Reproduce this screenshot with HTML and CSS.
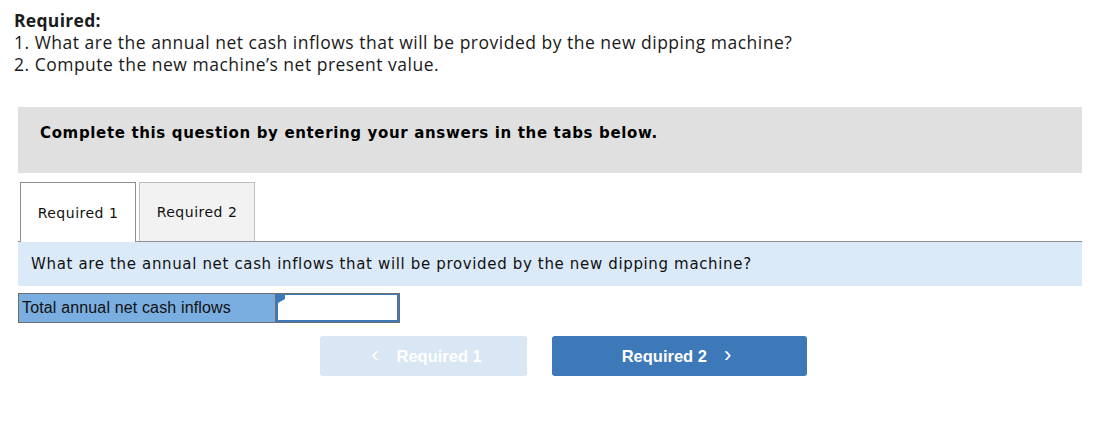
FILE: index.html
```html
<!DOCTYPE html>
<html>
<head>
<meta charset="utf-8">
<link rel="stylesheet" href="styles.css">
</head>
<body>
<div class="intro">
  <div class="req-title">Required:</div>
  <div class="req-line">1. What are the annual net cash inflows that will be provided by the new dipping machine?</div>
  <div class="req-line">2. Compute the new machine’s net present value.</div>
</div>
<div class="panel">
  <div class="notice">Complete this question by entering your answers in the tabs below.</div>
  <div class="tabs">
    <div class="tab active">Required 1</div>
    <div class="tab">Required 2</div>
  </div>
  <div class="question">What are the annual net cash inflows that will be provided by the new dipping machine?</div>
  <div class="answer-row">
    <div class="answer-label">Total annual net cash inflows</div>
    <div class="answer-input"><span class="flag"></span></div>
  </div>
  <div class="nav">
    <div class="btn btn-prev"><span class="chev">‹</span>Required 1</div>
    <div class="btn btn-next">Required 2<span class="chev">›</span></div>
  </div>
</div>
</body>
</html>
```
FILE: styles.css
```css
html, body {
  margin: 0;
  padding: 0;
  background: #fff;
}
body {
  width: 1108px;
  height: 432px;
  overflow: hidden;
}
.intro {
  padding: 9px 0 0 14px;
  font-family: "Open Sans", sans-serif;
  font-size: 17.5px;
  letter-spacing: 0.5px;
  color: #1a1a1a;
  line-height: 22px;
}
.req-title {
  font-weight: 700;
  letter-spacing: 0.3px;
}
.panel {
  margin: 32px 26px 0 18px;
  display: flex;
  flex-direction: column;
}
.notice {
  background: #e0e0e0;
  height: 66px;
  box-sizing: border-box;
  padding: 17px 0 0 22px;
  font-family: "DejaVu Sans", Verdana, sans-serif;
  font-weight: 700;
  font-size: 15px;
  letter-spacing: 0.65px;
  color: #000;
}
.tabs {
  display: flex;
  gap: 3px;
  margin-top: 9px;
  padding-left: 2px;
  border-bottom: 1px solid #8f8f8f;
  height: 59px;
}
.tab {
  width: 114px;
  border: 1px solid #bdbdbd;
  border-bottom: none;
  background: #f2f2f2;
  display: flex;
  align-items: center;
  justify-content: center;
  font-family: "DejaVu Sans", Verdana, sans-serif;
  font-size: 14px;
  letter-spacing: 0.5px;
  color: #111;
}
.tab.active {
  background: #fff;
  border-color: #8f8f8f;
  height: 60px;
}
.question {
  background: #dbeaf8;
  height: 44px;
  display: flex;
  align-items: center;
  padding-left: 13px;
  font-family: "DejaVu Sans", Verdana, sans-serif;
  font-size: 15px;
  letter-spacing: 0.65px;
  color: #111;
}
.answer-row {
  margin-top: 7px;
  width: 382px;
  height: 30px;
  box-sizing: border-box;
  border: 1px solid #6e6e6e;
  display: flex;
}
.answer-label {
  width: 257px;
  background: #7aaee0;
  border-right: 1px solid #6e6e6e;
  display: flex;
  align-items: center;
  padding-left: 3px;
  box-sizing: border-box;
  font-family: "Liberation Sans", Arial, sans-serif;
  font-size: 16px;
  letter-spacing: 0.15px;
  color: #111;
}
.answer-input {
  flex: 1;
  position: relative;
  background: #fff;
  border: 2px solid #3d78b8;
  border-top-width: 1px;
}
.flag {
  position: absolute;
  left: 0;
  top: 0;
  width: 0;
  height: 0;
  border-top: 4px solid transparent;
  border-bottom: 4px solid transparent;
  border-left: 7px solid #3d78b8;
  border-top-color: #3d78b8;
}
.nav {
  display: flex;
  gap: 25px;
  margin-top: 13px;
  padding-left: 302px;
}
.btn {
  height: 40px;
  box-sizing: border-box;
  border-radius: 3px;
  display: flex;
  align-items: center;
  justify-content: center;
  font-family: "Liberation Sans", Arial, sans-serif;
  font-weight: 700;
  font-size: 16.5px;
  color: #fff;
}
.btn-prev {
  width: 207px;
  padding-left: 6px;
  background: #d9e6f3;
}
.btn-next {
  width: 255px;
  padding-right: 6px;
  background: #3d78b8;
}
.chev {
  font-weight: 400;
  font-size: 22px;
  line-height: 1;
  margin-top: -3px;
}
.btn-prev .chev {
  margin-right: 18px;
}
.btn-next .chev {
  margin-left: 17px;
}
```
